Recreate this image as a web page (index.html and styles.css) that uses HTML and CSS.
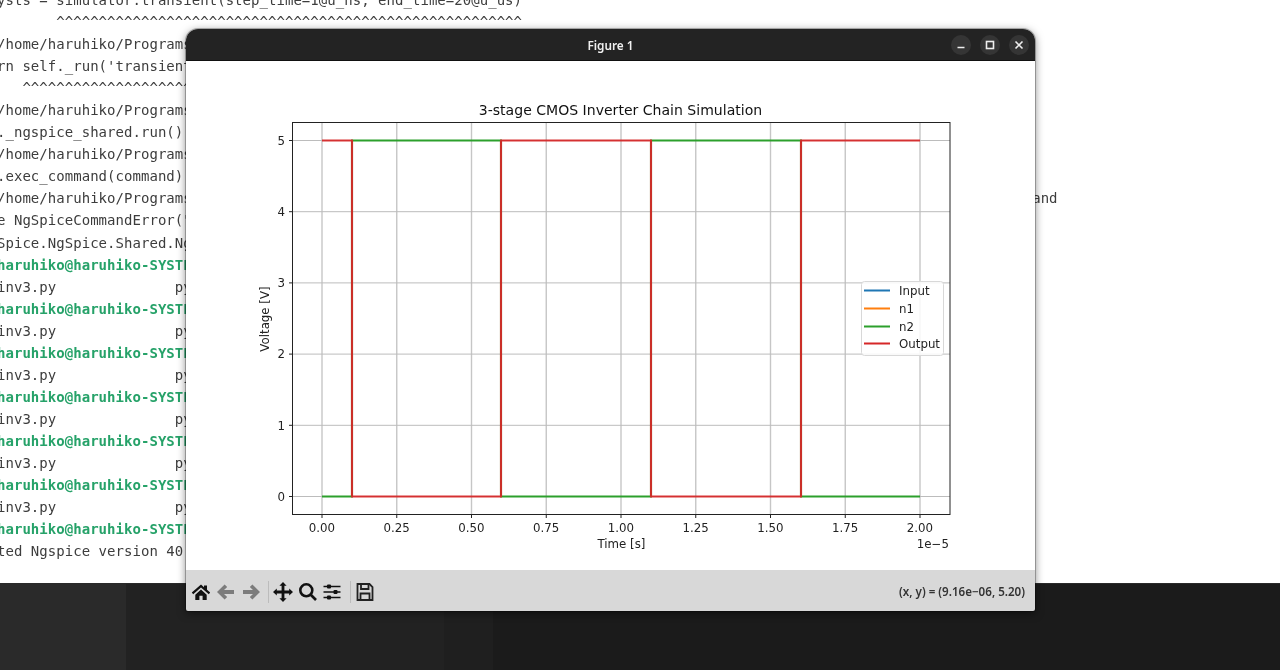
FILE: index.html
```html
<!DOCTYPE html>
<html lang="en">
<head>
<meta charset="utf-8">
<title>Figure 1</title>
<link rel="stylesheet" href="styles.css">
</head>
<body>
<main class="terminal">
<pre class="term-text">ysts = simulator.transient(step_time=1@u_ns, end_time=20@u_us)
       ^^^^^^^^^^^^^^^^^^^^^^^^^^^^^^^^^^^^^^^^^^^^^^^^^^^^^^^
/home/haruhiko/Programs/venv/pyspice/lib/python3.12/site-packages/PySpice/Spice/NgSpice/Simulation.py
rn self._run('transient', *args, **kwargs)
   ^^^^^^^^^^^^^^^^^^^^^^^^^^^^^^^^^^^^^^^
/home/haruhiko/Programs/venv/pyspice/lib/python3.12/site-packages/PySpice/Spice/NgSpice/Simulation.py
._ngspice_shared.run()
/home/haruhiko/Programs/venv/pyspice/lib/python3.12/site-packages/PySpice/Spice/NgSpice/Shared.py
.exec_command(command)
/home/haruhiko/Programs/venv/pyspice/lib/python3.12/site-packages/PySpice/Spice/NgSpice/Shared.py", line 115, in exec_comm<span class="tail">and</span>
e NgSpiceCommandError("Command '{}' failed".format(command))
Spice.NgSpice.Shared.NgSpiceCommandError
<b class="prompt">haruhiko@haruhiko-SYSTEM</b>
inv3.py              pyspice
<b class="prompt">haruhiko@haruhiko-SYSTEM</b>
inv3.py              pyspice
<b class="prompt">haruhiko@haruhiko-SYSTEM</b>
inv3.py              pyspice
<b class="prompt">haruhiko@haruhiko-SYSTEM</b>
inv3.py              pyspice
<b class="prompt">haruhiko@haruhiko-SYSTEM</b>
inv3.py              pyspice
<b class="prompt">haruhiko@haruhiko-SYSTEM</b>
inv3.py              pyspice
<b class="prompt">haruhiko@haruhiko-SYSTEM</b>
ted Ngspice version 40</pre>
</main>
<footer class="dock">
  <div class="dock-a"></div>
  <div class="dock-b"></div>
  <div class="dock-c"></div>
  <div class="dock-d"></div>
</footer>

<section class="window">
  <header class="titlebar">
    <span class="title">Figure 1</span>
    <div class="controls">
      <span class="ctl"><svg class="ctl-icon" viewBox="0 0 10 10"><path class="ctl-line" d="M1.5 7.5H8.5"/></svg></span>
      <span class="ctl"><svg class="ctl-icon" viewBox="0 0 10 10"><rect class="ctl-line" x="1.5" y="1.5" width="7" height="7"/></svg></span>
      <span class="ctl"><svg class="ctl-icon" viewBox="0 0 10 10"><path class="ctl-line" d="M1.5 1.5L8.5 8.5M8.5 1.5L1.5 8.5"/></svg></span>
    </div>
  </header>
  <div class="canvas">
    <svg class="plot" viewBox="0 0 849 509" width="849" height="509">
      <g class="grid">
        <path d="M136 62V453M210.75 62V453M285.5 62V453M360.25 62V453M435 62V453M509.75 62V453M584.5 62V453M659.25 62V453M734 62V453"/>
        <path class="grid-h" d="M107 79.5H764M107 150.7H764M107 221.9H764M107 293.1H764M107 364.3H764M107 435.5H764"/>
      </g>
      <g class="curves">
        <path class="c-green" d="M136 435.5H166V79.5H315V435.5H465V79.5H615V435.5H734"/>
        <path class="c-red" d="M136 79.5H166V435.5H315V79.5H465V435.5H615V79.5H734"/>
      </g>
      <path class="ticks" d="M136 453v4M210.75 453v4M285.5 453v4M360.25 453v4M435 453v4M509.75 453v4M584.5 453v4M659.25 453v4M734 453v4M107 79.5h-4M107 150.7h-4M107 221.9h-4M107 293.1h-4M107 364.3h-4M107 435.5h-4"/>
      <rect class="frame" x="106.5" y="61.5" width="657.5" height="392"/>
      <g class="xt">
        <text x="136" y="471">0.00</text><text x="210.75" y="471">0.25</text><text x="285.5" y="471">0.50</text>
        <text x="360.25" y="471">0.75</text><text x="435" y="471">1.00</text><text x="509.75" y="471">1.25</text>
        <text x="584.5" y="471">1.50</text><text x="659.25" y="471">1.75</text><text x="734" y="471">2.00</text>
      </g>
      <g class="yt">
        <text x="99" y="84">5</text><text x="99" y="155">4</text><text x="99" y="226">3</text>
        <text x="99" y="297">2</text><text x="99" y="369">1</text><text x="99" y="440">0</text>
      </g>
      <text class="lbl mid" x="435.5" y="487">Time [s]</text>
      <text class="lbl end" x="763" y="487">1e−5</text>
      <text class="lbl mid" transform="translate(83 258) rotate(-90)">Voltage [V]</text>
      <text class="plot-title" x="434.5" y="54">3-stage CMOS Inverter Chain Simulation</text>
      <rect class="legend" x="675.5" y="220.5" width="82" height="74" rx="3"/>
      <path class="l-blue" d="M678 229.5H704"/>
      <path class="l-orange" d="M678 247.5H704"/>
      <path class="l-green" d="M678 265.5H704"/>
      <path class="l-red" d="M678 282.5H704"/>
      <g class="lbl">
        <text x="713" y="234">Input</text><text x="713" y="252">n1</text>
        <text x="713" y="270">n2</text><text x="713" y="287">Output</text>
      </g>
    </svg>
  </div>
  <footer class="toolbar">
    <span class="tool tool-a"><svg class="ico" viewBox="0 0 20 20"><path class="solid" d="M10 2.5L.8 10.6l1.4 1.6L10 5.4l7.8 6.8 1.4-1.6L16 7.8V3.5h-3v1.7zM4.3 12.7L10 7.6l5.7 5.1V18H11.6v-4.3H8.4V18H4.3z"/></svg></span>
    <span class="tool tool-a"><svg class="ico" viewBox="0 0 20 20"><path class="dim" d="M1 10l7.600-7.600 2.600 2.600L8 8h10v4H8l3.200 3-2.600 2.600z"/></svg></span>
    <span class="tool tool-a"><svg class="ico" viewBox="0 0 20 20"><path class="dim" d="M19 10l-7.600-7.600L8.800 5 12 8H2v4h10l-3.200 3 2.600 2.600z"/></svg></span>
    <i class="sep"></i>
    <span class="tool"><svg class="ico" viewBox="0 0 20 20"><path class="solid" d="M10 0l3.600 3.800H11.400V8.600h4.800V6.400L20 10l-3.800 3.600v-2.200H11.400v4.800h2.200L10 20l-3.600-3.800h2.200v-4.800H3.800v2.200L0 10l3.800-3.600v2.200h4.800V3.800H6.400z"/></svg></span>
    <span class="tool"><svg class="ico" viewBox="0 0 20 20"><circle class="line" cx="8.300" cy="8.300" r="6"/><path class="line" d="M12.500 12.500L18 18"/></svg></span>
    <span class="tool"><svg class="ico" viewBox="0 0 20 20"><path class="thin" d="M1.500 4.500h17M1.500 10h17M1.500 15.500h17"/><rect class="solid" x="5" y="2.500" width="4" height="4" rx="1"/><rect class="solid" x="11.500" y="8" width="4" height="4" rx="1"/><rect class="solid" x="5" y="13.500" width="4" height="4" rx="1"/></svg></span>
    <i class="sep"></i>
    <span class="tool"><svg class="ico" viewBox="0 0 20 20"><path class="outline" d="M2.500 2h12l3 3v13h-15z"/><path class="outline" d="M6 2v5h7.500V2M5.500 18v-6.500h9V18"/></svg></span>
    <span class="status">(x, y) = (9.16e−06, 5.20)</span>
  </footer>
</section>
</body>
</html>
```
FILE: styles.css
```css
* { box-sizing: border-box; }
html, body { margin: 0; height: 100%; }
body {
  width: 1280px;
  height: 670px;
  overflow: hidden;
  display: flex;
  flex-direction: column;
  background: #1c1c1c;
  filter: blur(0.35px);
}
.terminal {
  height: 584px;
  flex: none;
  background: #fff;
  overflow: hidden;
  border-bottom: 1px solid #2a2a2a;
}
.term-text {
  margin: -11px 0 0 -3px;
  font: 14px/22.04px "DejaVu Sans Mono", monospace;
  letter-spacing: .04px;
  color: #3d3d3d;
}
.tail { margin-left: 2px; }
.prompt { color: #26a269; font-weight: 700; }
.dock { flex: 1; display: flex; }
.dock-a { width: 126px; background: #2a2a2a; }
.dock-b { width: 318px; background: #222; }
.dock-c { width: 49px; background: #1f1f1f; }
.dock-d { flex: 1; background: #1b1b1b; }

.window {
  position: absolute;
  left: 186px;
  top: 29px;
  width: 849px;
  height: 582px;
  display: flex;
  flex-direction: column;
  border-radius: 12px 12px 2px 2px;
  overflow: hidden;
  box-shadow: 0 0 0 1px rgba(0,0,0,.25), 0 2px 8px rgba(0,0,0,.5);
}
.titlebar {
  height: 32px;
  flex: none;
  background: #232323;
  border-bottom: 1px solid #111;
  display: flex;
  align-items: center;
  justify-content: flex-end;
  position: relative;
  padding-right: 6px;
}
.title {
  position: absolute;
  left: 0;
  right: 0;
  text-align: center;
  font: 600 11.8px "Noto Sans", sans-serif;
  color: #f0f0f0;
}
.controls { display: flex; gap: 9px; }
.ctl {
  width: 20px;
  height: 20px;
  border-radius: 50%;
  background: #353535;
  display: flex;
  align-items: center;
  justify-content: center;
}
.ctl-icon { width: 10px; height: 10px; }
.ctl-line { fill: none; stroke: #eee; stroke-width: 1.6; }

.canvas { flex: 1; background: #fff; min-height: 0; }
.plot { display: block; }
.grid path { fill: none; stroke: #c6c6c6; stroke-width: 1.4; }
.grid .grid-h { stroke: #bcbcbc; stroke-width: 1; }
.curves path { fill: none; stroke-width: 2.1; }
.c-green { stroke: #2ca02c; }
.c-red { stroke: #d62728; stroke-opacity: .93; }
.ticks { fill: none; stroke: #222; stroke-width: 1; }
.frame { fill: none; stroke: #222; stroke-width: 1; }
.xt text, .yt text, .lbl, .lbl text {
  font: 11.8px "DejaVu Sans", sans-serif;
  fill: #222;
}
.xt text { text-anchor: middle; }
.yt text { text-anchor: end; }
.mid { text-anchor: middle; }
.end { text-anchor: end; }
.plot-title {
  font: 14.05px "DejaVu Sans", sans-serif;
  fill: #111;
  text-anchor: middle;
}
.legend { fill: #fff; fill-opacity: .85; stroke: #d8d8d8; stroke-width: 1; }
.l-blue, .l-orange, .l-green, .l-red { fill: none; stroke-width: 1.8; }
.l-blue { stroke: #1f77b4; }
.l-orange { stroke: #ff7f0e; }
.l-green { stroke: #2ca02c; }
.l-red { stroke: #d62728; }

.toolbar {
  height: 41px;
  flex: none;
  background: #d8d8d8;
  display: flex;
  align-items: center;
  padding: 2px 10px 0 2px;
}
.tool {
  width: 24.5px;
  display: flex;
  justify-content: center;
}
.tool-a { width: 25px; }
.ico { width: 20px; height: 20px; display: block; }
.solid { fill: #111; }
.dim { fill: #7c7c7c; }
.line { fill: none; stroke: #111; stroke-width: 2.6; }
.thin { fill: none; stroke: #111; stroke-width: 1.3; }
.outline { fill: none; stroke: #222; stroke-width: 1.8; }
.sep { width: 1px; height: 22px; background: #bcbcbc; margin: 0 2px 0 5px; }
.status {
  margin-left: auto;
  font: 600 11.6px "Noto Sans", sans-serif;
  color: #333;
}
```
